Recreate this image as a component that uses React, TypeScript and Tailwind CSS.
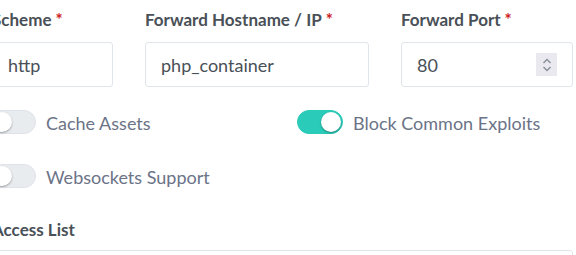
import React from "react";

const font = { fontFamily: "Lato, 'Noto Sans', sans-serif" };

function Label({ text, required }: { text: string; required?: boolean }) {
  return (
    <div className="mb-[10px] h-[24px] leading-[24px] text-[17px] font-bold text-[#495057] whitespace-nowrap">
      {text}
      {required && <span className="ml-[4px] text-[#cd201f]">*</span>}
    </div>
  );
}

function Toggle({ on, label }: { on?: boolean; label: string }) {
  return (
    <div className="flex h-[24px] items-center">
      <span
        className={
          on
            ? "relative h-[24px] w-[46px] rounded-full bg-[#2bcbba] border border-[#2bcbba]"
            : "relative h-[24px] w-[46px] rounded-full bg-[#e9ecef] border border-[#dfe3e9]"
        }
      >
        <span
          className={
            on
              ? "absolute top-[1px] right-[1px] h-[20px] w-[20px] rounded-full bg-white shadow-[0_1px_2px_rgba(0,0,0,0.35)]"
              : "absolute top-[1px] left-[1px] h-[20px] w-[20px] rounded-full bg-white shadow-[0_1px_2px_rgba(0,0,0,0.35)]"
          }
        />
      </span>
      <span className="relative top-[1px] ml-[10px] text-[18px] text-[#6b7387] leading-[24px] whitespace-nowrap">
        {label}
      </span>
    </div>
  );
}

export default function App() {
  return (
    <div className="w-[576px] h-[255px] overflow-hidden bg-white" style={font}>
      <div className="ml-[-8px] w-[581px] pt-[8px]">
        <div className="flex gap-[32px]">
          <div className="w-[121px]">
            <Label text="Scheme" required />
            <div className="h-[45px] rounded-[3px] border border-[#e0e5ec] px-[15px] pt-[2px] flex items-center text-[18px] text-[#495057]">
              http
            </div>
          </div>
          <div className="w-[224px]">
            <Label text="Forward Hostname / IP" required />
            <div className="h-[45px] rounded-[3px] border border-[#e0e5ec] px-[15px] pt-[2px] flex items-center text-[18px] text-[#495057]">
              php_container
            </div>
          </div>
          <div className="w-[172px]">
            <Label text="Forward Port" required />
            <div className="h-[45px] rounded-[3px] border border-[#e0e5ec] pl-[15px] pr-[15px] flex items-center justify-between text-[18px] text-[#495057]">
              <span className="pt-[2px]">80</span>
              <span className="flex h-[23px] w-[21px] flex-col items-center justify-center bg-[#e9e9ef]">
                <svg width="12" height="18" viewBox="0 0 12 18" fill="none" stroke="#8a8f99" strokeWidth="1.4">
                  <path d="M2.5 7 L6 3.5 L9.5 7" />
                  <path d="M2.5 11 L6 14.5 L9.5 11" />
                </svg>
              </span>
            </div>
          </div>
        </div>

        <div className="mt-[23px] flex ml-[-2px]">
          <div className="w-[307px]">
            <Toggle label="Cache Assets" />
          </div>
          <Toggle on label="Block Common Exploits" />
        </div>
        <div className="mt-[30px] ml-[-2px]">
          <Toggle label="Websockets Support" />
        </div>

        <div className="mt-[30px]">
          <Label text="Access List" />
        </div>
        <div className="mt-[-2px] h-[45px] rounded-[3px] border border-[#e0e5ec]" />
      </div>
    </div>
  );
}
